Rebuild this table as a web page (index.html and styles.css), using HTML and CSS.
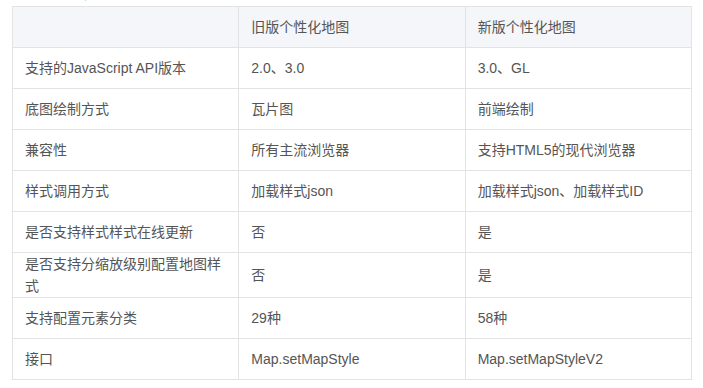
FILE: index.html
```html
<!DOCTYPE html>
<html lang="zh-CN">
<head>
<meta charset="utf-8">
<title>个性化地图对比</title>
<link rel="stylesheet" href="styles.css">
</head>
<body>
<div class="page">
  <p class="caption">新旧版个性化地图功能对比</p>
  <table class="cmp">
    <thead>
      <tr><th></th><th>旧版个性化地图</th><th>新版个性化地图</th></tr>
    </thead>
    <tbody>
      <tr><td>支持的JavaScript API版本</td><td>2.0、3.0</td><td>3.0、GL</td></tr>
      <tr><td>底图绘制方式</td><td>瓦片图</td><td>前端绘制</td></tr>
      <tr><td>兼容性</td><td>所有主流浏览器</td><td>支持HTML5的现代浏览器</td></tr>
      <tr><td>样式调用方式</td><td>加载样式json</td><td>加载样式json、加载样式ID</td></tr>
      <tr><td>是否支持样式样式在线更新</td><td>否</td><td>是</td></tr>
      <tr><td>是否支持分缩放级别配置地图样式</td><td>否</td><td>是</td></tr>
      <tr><td>支持配置元素分类</td><td>29种</td><td>58种</td></tr>
      <tr><td>接口</td><td>Map.setMapStyle</td><td>Map.setMapStyleV2</td></tr>
    </tbody>
  </table>
</div>
</body>
</html>
```
FILE: styles.css
```css
html, body {
  margin: 0;
  padding: 0;
  background: #ffffff;
}
.page {
  padding: 0 12px 0 12px;
  font-family: "Liberation Sans", "Noto Sans CJK SC", sans-serif;
  color: #555555;
  font-size: 14px;
  overflow: hidden;
}
.caption {
  margin: -17px 0 3px 0;
  line-height: 20px;
  font-size: 14px;
  color: #333;
}
.cmp {
  width: 680px;
  border-collapse: collapse;
  table-layout: fixed;
}
.cmp th, .cmp td {
  border: 1px solid #e3e3e3;
  height: 40px;
  padding: 0 12px;
  line-height: 22px;
  text-align: left;
  font-weight: normal;
  vertical-align: middle;
}
.cmp th {
  background: #f5f6fa;
}
```
